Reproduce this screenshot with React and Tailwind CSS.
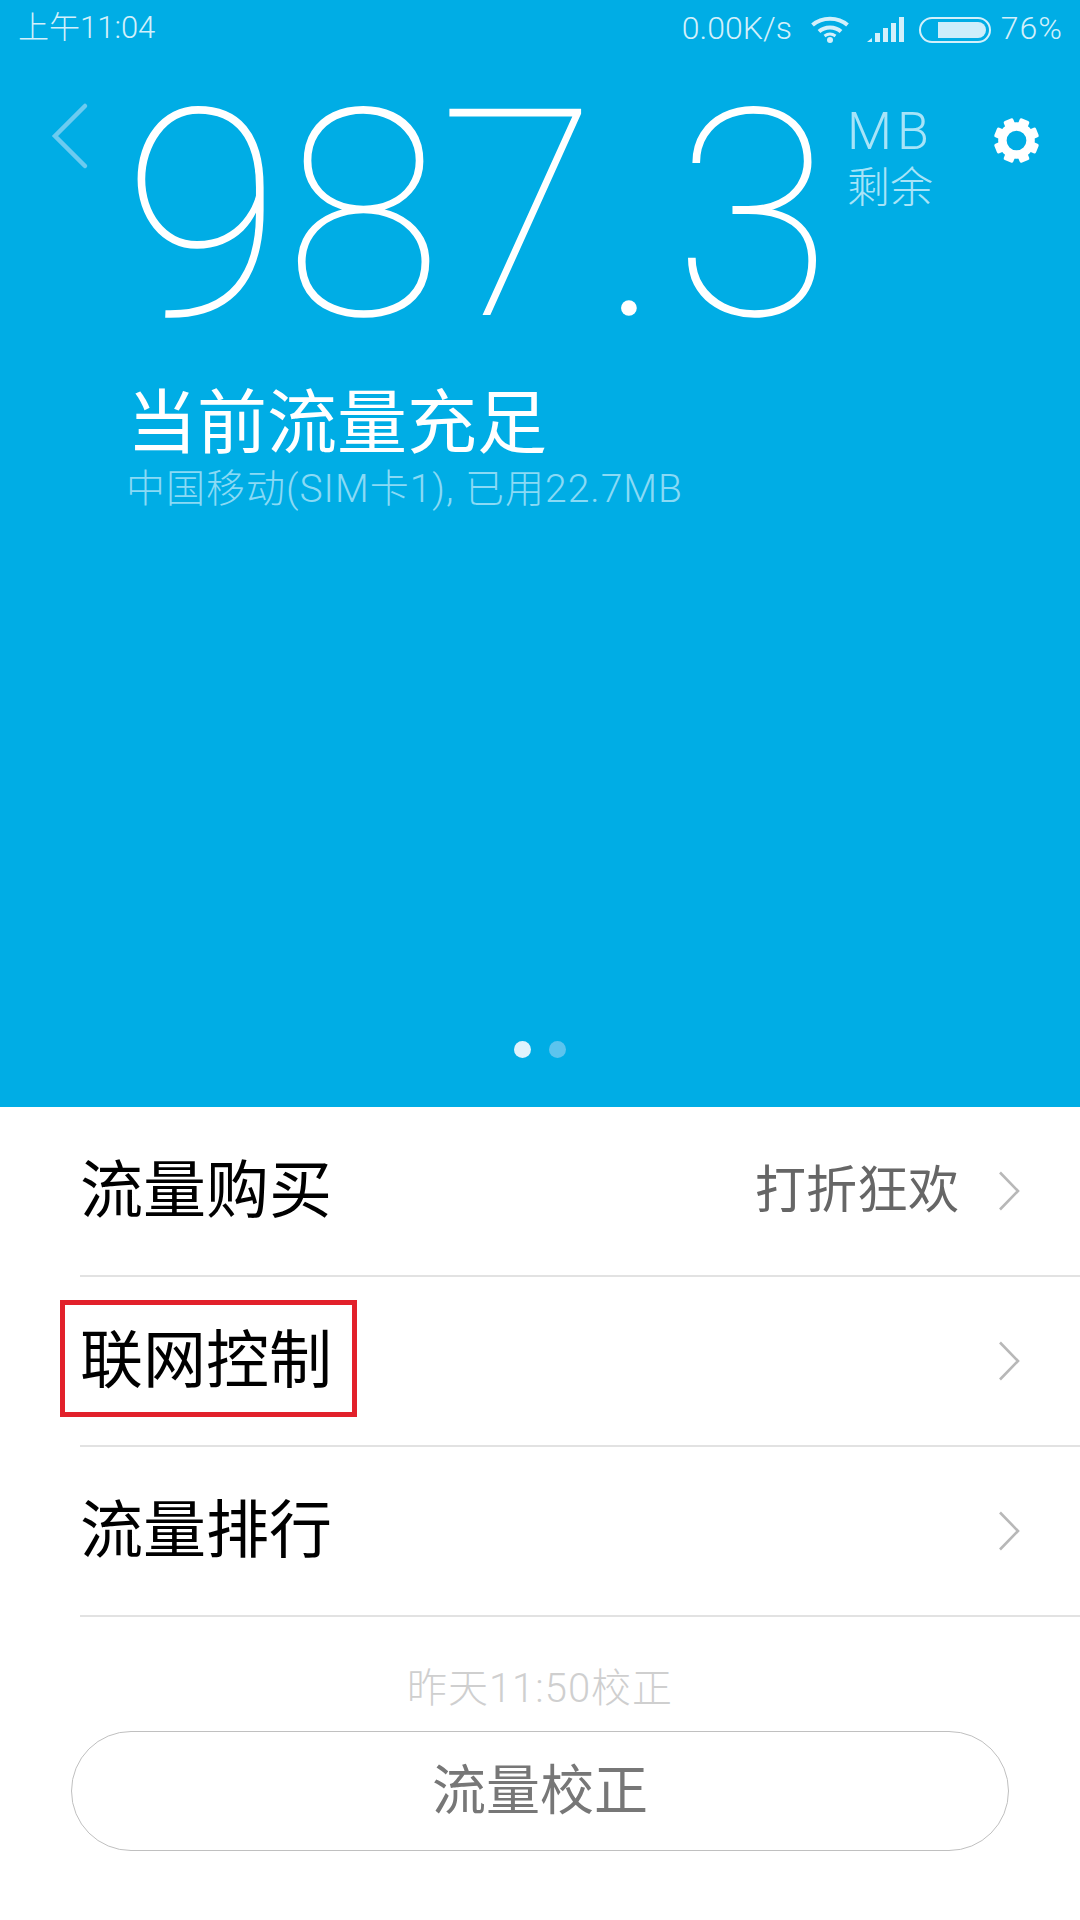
const cjk = { fontFamily: '"Roboto", "Noto Sans CJK SC", sans-serif' };

function Chevron() {
  return (
    <svg width="22" height="40" viewBox="0 0 22 40" fill="none" stroke="#b8b8b8" strokeWidth="2.6">
      <path d="M2 1.5 L20 20 L2 38.5" />
    </svg>
  );
}

function Gear() {
  const teeth = [0, 45, 90, 135, 180, 225, 270, 315];
  return (
    <svg width="47" height="47" viewBox="0 0 50 50">
      {teeth.map(a => (
        <rect key={a} x="19.5" y="1" width="11" height="10" rx="2" fill="#fff" transform={`rotate(${a + 22.5} 25 25)`} />
      ))}
      <circle cx="25" cy="25" r="15" fill="none" stroke="#fff" strokeWidth="9" />
    </svg>
  );
}

function StatusBar() {
  return (
    <div className="h-[56px] flex items-center justify-between pl-[18px] pr-[17px] font-light text-[#d3f0fb]">
      <span className="text-[31px]">上午11:04</span>
      <div className="flex items-center text-[32px]">
        <span>0.00K/s</span>
        <svg className="ml-[19px] mt-[3px]" width="38" height="27" viewBox="0 0 38 27" fill="none" stroke="#d3f0fb" strokeWidth="4">
          <path d="M1.5 9 C11 0.5 27 0.5 36.5 9" />
          <path d="M8 15.5 C14 10 24 10 30 15.5" />
          <path d="M13.5 20 C17 17.5 21 17.5 24.5 20" strokeWidth="3" />
          <circle cx="19" cy="24" r="3" fill="#d3f0fb" stroke="none" />
        </svg>
        <svg className="ml-[18px] mt-[3px]" width="37" height="25" viewBox="0 0 37 25" fill="#d3f0fb">
          <path d="M0 25 L5 21 V25 Z" />
          <rect x="8" y="16" width="5" height="9" />
          <rect x="16" y="11" width="5" height="14" />
          <rect x="24" y="6" width="5" height="19" />
          <rect x="32" y="0" width="5" height="25" />
        </svg>
        <div className="ml-[15px] mt-[3px] w-[72px] h-[26px] rounded-full border-2 border-[#d3f0fb] p-[3px] flex justify-end">
          <div className="w-[48px] rounded-r-full bg-[#cdeefb]"></div>
        </div>
        <span className="ml-[10px] tracking-[1px]">76%</span>
      </div>
    </div>
  );
}

function Row({ title, extra }) {
  return (
    <div className="h-[170px] border-b-2 border-[#e2e2e2] flex items-center justify-between pr-[60px]">
      <span className="text-[63px] text-black">{title}</span>
      <div className="flex items-center">
        {extra && <span className="text-[51px] text-[#666] mr-[39px]">{extra}</span>}
        <Chevron />
      </div>
    </div>
  );
}

export default function App() {
  return (
    <div className="w-[1080px] h-[1920px] bg-white overflow-hidden" style={cjk}>
      <div className="h-[1107px] bg-[#00ade5] flex flex-col">
        <StatusBar />
        <div className="flex items-start">
          <svg className="ml-[50px] mt-[46px]" width="40" height="68" viewBox="0 0 40 68" fill="none" stroke="#6ccbf0" strokeWidth="4.5" strokeLinecap="round">
            <path d="M35 4 L5 34 L35 64" />
          </svg>
          <div className="ml-[33px] mt-[14px] text-[290px] leading-[292px] font-thin text-white tracking-[-2px] w-[724px]">
            <span className="mr-[4px]">9</span>
            <span className="mr-[-2px]">8</span>
            <span className="mr-[5px]">7</span>
            <span className="mr-[13px]">.</span>
            <span>3</span>
          </div>
          <div className="mt-[48px]">
            <div className="text-[52px] leading-[56px] font-light text-[#a8e4f8] tracking-[5px]">MB</div>
            <div className="text-[43px] leading-[56px] font-light text-[#a8e4f8]">剩余</div>
          </div>
          <div className="ml-[59px] mt-[61px]"><Gear /></div>
        </div>
        <div className="ml-[127px] mt-[21px] text-[70px] leading-[82px] text-white">当前流量充足</div>
        <div className="ml-[126px] text-[39px] leading-[48px] tracking-[1px] font-light text-[#8adaf5]">中国移动(SIM卡1), 已用22.7MB</div>
        <div className="mt-auto mb-[49px] flex justify-center gap-[18px]">
          <div className="w-[17px] h-[17px] rounded-full bg-[#dff3fd]"></div>
          <div className="w-[17px] h-[17px] rounded-full bg-[#5cc4ee]"></div>
        </div>
      </div>
      <div className="pl-[80px]">
        <Row title="流量购买" extra="打折狂欢" />
        <div className="relative">
          <Row title="联网控制" />
          <div className="absolute left-[-20px] top-[23px] w-[297px] h-[117px] border-[5px] border-[#e2212b]"></div>
        </div>
        <Row title="流量排行" />
      </div>
      <div className="mt-[52px] text-center text-[40px] leading-[40px] tracking-[1px] font-light text-[#cfcfcf]">昨天11:50校正</div>
      <div className="mx-[71px] mt-[22px] h-[120px] rounded-full border border-[#c0c0c0] flex items-center justify-center text-[54px] text-[#777]">
        流量校正
      </div>
    </div>
  );
}
